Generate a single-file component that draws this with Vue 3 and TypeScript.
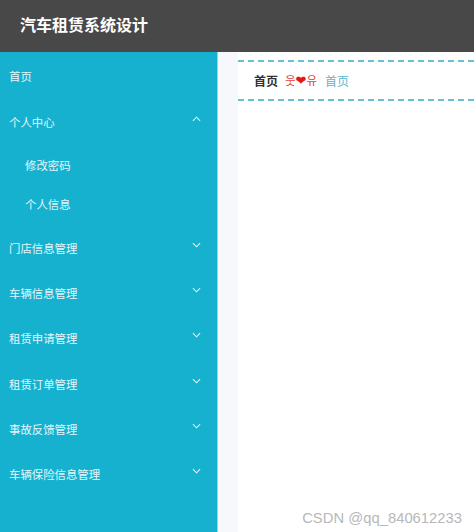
<script setup lang="ts">
interface MenuItem {
  label: string
  open?: boolean
  children?: string[]
}

const menu: MenuItem[] = [
  { label: '首页' },
  { label: '个人中心', open: true, children: ['修改密码', '个人信息'] },
  { label: '门店信息管理', children: [] },
  { label: '车辆信息管理', children: [] },
  { label: '租赁申请管理', children: [] },
  { label: '租赁订单管理', children: [] },
  { label: '事故反馈管理', children: [] },
  { label: '车辆保险信息管理', children: [] }
]
</script>

<template>
  <div class="page">
    <header class="top">
      <h1>汽车租赁系统设计</h1>
    </header>
    <div class="body">
      <aside class="side">
        <div v-for="item in menu" :key="item.label" class="group">
          <div class="row">
            <span>{{ item.label }}</span>
            <svg v-if="item.children" class="arrow" :class="{ up: item.open }" viewBox="0 0 10 6" width="9" height="6">
              <path d="M1 1l4 4 4-4" fill="none" stroke="currentColor" stroke-width="1.2" />
            </svg>
          </div>
          <template v-if="item.open">
            <div v-for="sub in item.children" :key="sub" class="sub">{{ sub }}</div>
          </template>
        </div>
      </aside>
      <main class="main">
        <div class="panel">
          <nav class="crumb">
            <span class="cur">首页</span>
            <span class="sep">웃<i>❤</i>유</span>
            <span class="link">首页</span>
          </nav>
        </div>
      </main>
    </div>
    <div class="mark">CSDN @qq_840612233</div>
  </div>
</template>

<style scoped>
.page {
  position: relative;
  width: 474px;
  height: 532px;
  overflow: hidden;
  display: flex;
  flex-direction: column;
  font-family: "Liberation Sans", "Noto Sans CJK SC", sans-serif;
  background: #fff;
}
.top {
  height: 52px;
  flex: none;
  display: flex;
  align-items: center;
  padding: 0 0 5px 20px;
  background: #484848;
  box-sizing: border-box;
}
.top h1 {
  margin: 0;
  font-size: 16px;
  font-weight: 700;
  color: #fff;
}
.body {
  flex: 1;
  display: flex;
  min-height: 0;
}
.side {
  width: 218px;
  flex: none;
  box-sizing: border-box;
  background: #17b1d0;
  border-right: 1px solid #7fdcec;
  color: #e4f6fa;
  font-size: 11.4px;
}
.row {
  height: 45.3px;
  display: flex;
  align-items: center;
  justify-content: space-between;
  padding: 0 16px 0 9px;
}
.group:first-child .row {
  height: 47px;
}
.group:nth-child(2) .row {
  height: 46px;
}
.arrow {
  margin-top: -6px;
}
.arrow.up {
  transform: rotate(180deg);
}
.sub {
  height: 39px;
  display: flex;
  align-items: center;
  padding-left: 25px;
}
.sub:last-child {
  margin-bottom: 2px;
}
.main {
  flex: 1;
  padding-left: 20px;
  background: #f6f8fb;
}
.panel {
  height: 100%;
  padding-top: 8px;
  box-sizing: border-box;
  background: #fff;
}
.crumb {
  height: 41px;
  display: flex;
  align-items: center;
  padding: 0 0 1px 16px;
  box-sizing: border-box;
  font-size: 12px;
  border-top: 2px dashed #66bfd3;
  border-bottom: 2px dashed #66bfd3;
}
.cur {
  color: #303133;
  font-weight: 700;
}
.sep {
  margin: 0 8px 0 7px;
  color: #e0403a;
  font-size: 11.5px;
  font-family: "Noto Sans CJK KR", sans-serif;
}
.sep i {
  font-style: normal;
  color: #e8160c;
  font-size: 13px;
  font-family: "DejaVu Sans", sans-serif;
}
.link {
  color: #5ab5cc;
}
.mark {
  position: absolute;
  right: 12px;
  bottom: 6px;
  font-size: 14.8px;
  color: #b8b8b8;
}
</style>
